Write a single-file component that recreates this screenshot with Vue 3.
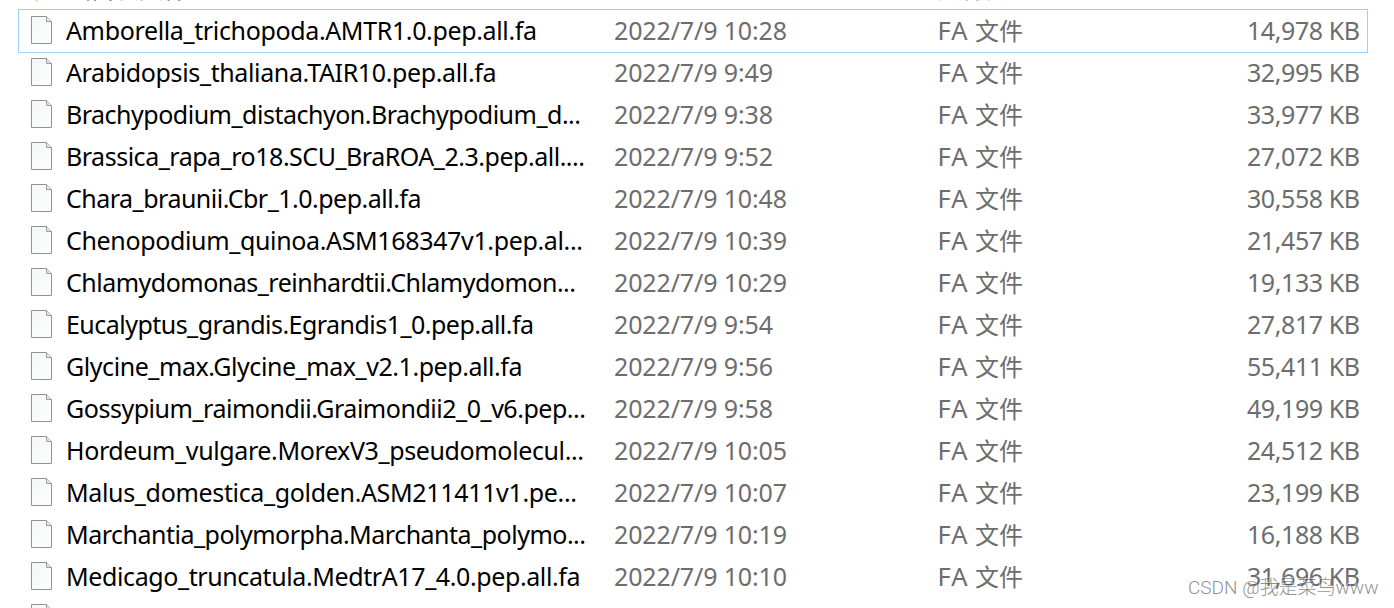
<script setup>
const files = [
  ['Amborella_trichopoda.AMTR1.0.pep.all.fa', 471, '2022/7/9 10:28', '14,978 KB'],
  ['Arabidopsis_thaliana.TAIR10.pep.all.fa', 430.5, '2022/7/9 9:49', '32,995 KB'],
  ['Brachypodium_distachyon.Brachypodium_d...', 515, '2022/7/9 9:38', '33,977 KB'],
  ['Brassica_rapa_ro18.SCU_BraROA_2.3.pep.all....', 519, '2022/7/9 9:52', '27,072 KB'],
  ['Chara_braunii.Cbr_1.0.pep.all.fa', 355.5, '2022/7/9 10:48', '30,558 KB'],
  ['Chenopodium_quinoa.ASM168347v1.pep.al...', 517, '2022/7/9 10:39', '21,457 KB'],
  ['Chlamydomonas_reinhardtii.Chlamydomon...', 510, '2022/7/9 10:29', '19,133 KB'],
  ['Eucalyptus_grandis.Egrandis1_0.pep.all.fa', 468, '2022/7/9 9:54', '27,817 KB'],
  ['Glycine_max.Glycine_max_v2.1.pep.all.fa', 456.5, '2022/7/9 9:56', '55,411 KB'],
  ['Gossypium_raimondii.Graimondii2_0_v6.pep...', 520, '2022/7/9 9:58', '49,199 KB'],
  ['Hordeum_vulgare.MorexV3_pseudomolecul...', 518, '2022/7/9 10:05', '24,512 KB'],
  ['Malus_domestica_golden.ASM211411v1.pe...', 511, '2022/7/9 10:07', '23,199 KB'],
  ['Marchantia_polymorpha.Marchanta_polymo...', 520, '2022/7/9 10:19', '16,188 KB'],
  ['Medicago_truncatula.MedtrA17_4.0.pep.all.fa', 514.5, '2022/7/9 10:10', '31,696 KB'],
  ['', 0, '', ''],
].map(([name, width, date, size]) => ({ name, width, date, size, dateWidth: date.length === 14 ? 173 : 159 }))
</script>

<template>
  <main class="explorer">
    <div class="row folder">
      <svg class="icon" viewBox="0 0 22 28"><path d="M0 24h7v4.500z" fill="#ffe08a" /></svg>
      <svg class="name"><text x="0" y="29">蛋白质文件</text></svg>
      <svg class="date"><text x="0" y="29" textLength="159">2022/7/9 9:49</text></svg>
      <svg class="type"><text x="0" y="29">文件夹</text></svg>
    </div>
    <div v-for="(file, i) in files" :key="i" class="row" :class="{ focused: i === 0 }">
      <svg class="icon" viewBox="0 0 22 28">
        <defs>
          <linearGradient :id="'paper' + i" x1="0" y1="0" x2="1" y2="1">
            <stop offset="0" stop-color="#f4f6f6" /><stop offset="1" stop-color="#fdfefe" />
          </linearGradient>
        </defs>
        <path d="M.5.5h15l5 5v22H.5z" :fill="`url(#paper${i})`" stroke="#929292" />
        <path d="M15.5.5v5h5" fill="#e6e7e8" stroke="#9b9b9b" />
      </svg>
      <template v-if="file.name">
        <svg class="name"><text x="0" y="29" :textLength="file.width">{{ file.name }}</text></svg>
        <svg class="date"><text x="0" y="29" :textLength="file.dateWidth">{{ file.date }}</text></svg>
        <svg class="type"><text class="latin" x="-.5" y="29" textLength="30">FA</text><text x="37" y="29">文件</text></svg>
        <svg class="size"><text x="0" y="29" textLength="113">{{ file.size }}</text></svg>
      </template>
    </div>
    <div class="watermark">CSDN @我是菜鸟www</div>
  </main>
</template>

<style>
body { margin: 0; background: #fff; }
</style>

<style scoped>
.explorer {
  position: relative;
  width: 1394px;
  height: 608px;
  overflow: hidden;
  font-family: "Noto Sans", "Noto Sans CJK SC", sans-serif;
  font-size: 25px;
}
.row {
  box-sizing: border-box;
  display: grid;
  grid-template-columns: 35px 548px 324px 309px 115px;
  height: 42px;
  margin-left: 18px;
  width: 1350px;
  padding-left: 13px;
  padding-top: 1px;
}
.folder { margin-top: -32px; }
.row.focused {
  outline: 1px solid #99d1ff;
  outline-offset: 0;
  margin-left: 19px;
  padding-left: 12px;
  width: 1348px;
}
svg { display: block; width: 100%; height: 40px; overflow: visible; }
.icon { width: 22px; height: 28px; margin-top: 5px; }
text { fill: #6d6d6d; }
.name text { fill: #000; }
.folder .name text { font-size: 24.4px; }
.type text { font-size: 24px; }
.type .latin { font-size: 25.5px; }
.watermark {
  position: absolute;
  left: 1188px;
  top: 575px;
  font: 19px/26px Roboto, "Noto Sans CJK SC", sans-serif;
  font-weight: 300;
  color: rgba(80, 80, 80, .65);
  text-shadow: -1px -1px 0 rgba(255, 255, 255, .5);
  white-space: nowrap;
}
</style>
